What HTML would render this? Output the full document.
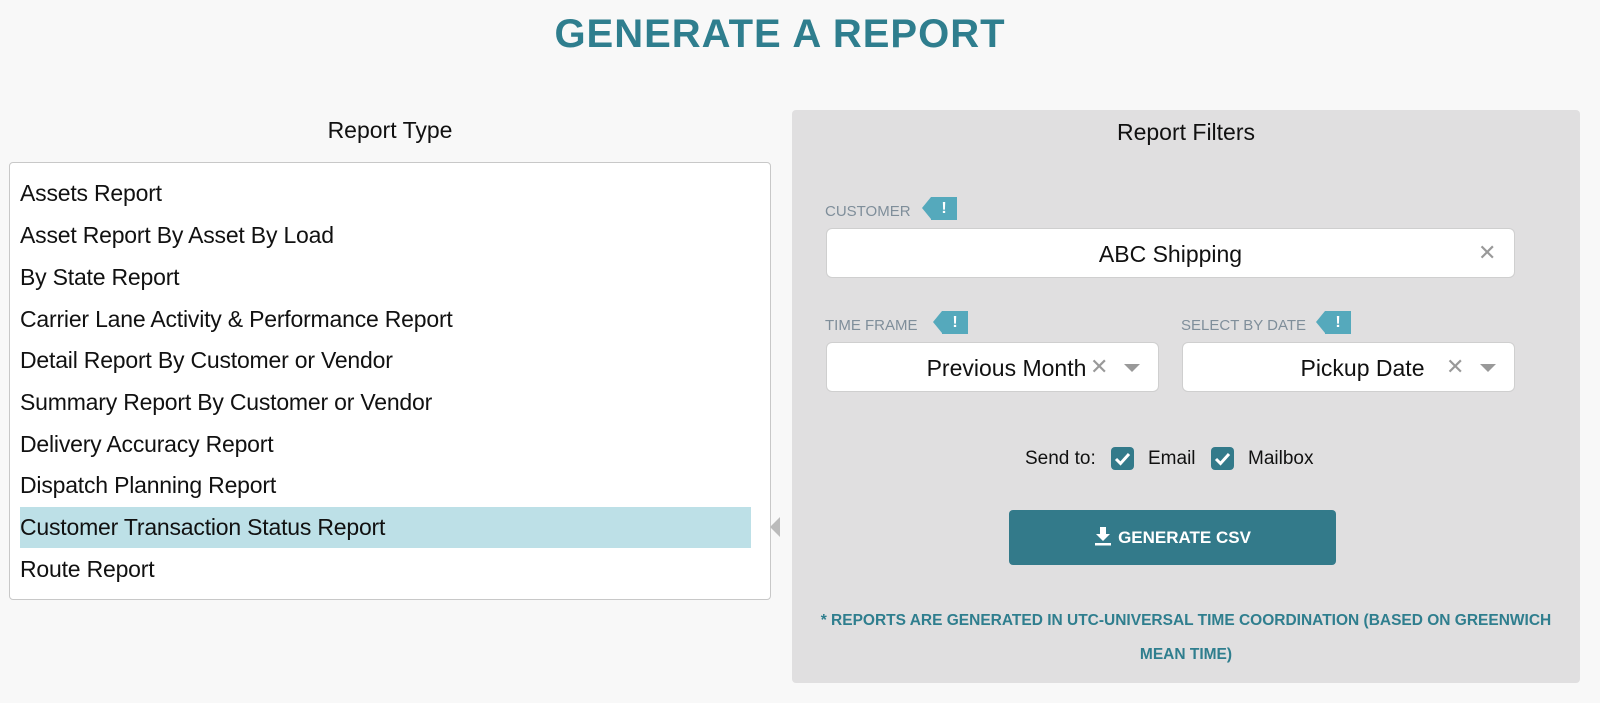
<!DOCTYPE html>
<html><head><style>
body{margin:0;width:1600px;height:703px;background:#f8f8f8;font-family:"Liberation Sans",sans-serif;position:relative;overflow:hidden;color:#111}
.a{position:absolute}
h1{position:absolute;left:0;width:1560px;top:12px;margin:0;text-align:center;font-size:40px;color:#2f7e8e;letter-spacing:1px;font-weight:bold}
.list{left:9px;top:162px;width:760px;height:436px;border:1px solid #c8c8c8;border-radius:4px;background:#fff}
.it{position:absolute;left:10px;width:731px;height:41px;line-height:41px;font-size:23px;letter-spacing:-0.2px}
.sel{background:#bde0e7}
.panel{left:792px;top:110px;width:788px;height:573px;background:#e0dfe0;border-radius:4px}
.lbl{font-size:15px;color:#7f8e9a;}
.badge{width:26px;height:23px;background:#55a9bc;color:#fff;font-weight:bold;font-size:16px;text-align:center;line-height:23px}
.badge:before{content:"";position:absolute;left:-9px;top:0;border-right:9px solid #55a9bc;border-top:11.5px solid transparent;border-bottom:11.5px solid transparent}
.inp{background:#fff;border:1px solid #cfcfcf;border-radius:6px;font-size:23px;text-align:center;box-sizing:border-box}
.x{color:#999;font-size:22px}
.caret{width:0;height:0;border-left:8px solid transparent;border-right:8px solid transparent;border-top:8px solid #999}
.cb{width:23px;height:23px;background:#337a8a;border-radius:4px}
</style></head><body>
<h1>GENERATE A REPORT</h1>
<div class="a" style="left:10px;width:760px;top:117px;text-align:center;font-size:23px">Report Type</div>
<div class="a list">
<div class="it" style="top:10px">Assets Report</div>
<div class="it" style="top:52px">Asset Report By Asset By Load</div>
<div class="it" style="top:94px">By State Report</div>
<div class="it" style="top:136px">Carrier Lane Activity &amp; Performance Report</div>
<div class="it" style="top:177px">Detail Report By Customer or Vendor</div>
<div class="it" style="top:219px">Summary Report By Customer or Vendor</div>
<div class="it" style="top:261px">Delivery Accuracy Report</div>
<div class="it" style="top:302px">Dispatch Planning Report</div>
<div class="it sel" style="top:344px">Customer Transaction Status Report</div>
<div class="it" style="top:386px">Route Report</div>
</div>
<div class="a" style="left:770px;top:517px;border-right:10px solid #bbb;border-top:10px solid transparent;border-bottom:10px solid transparent"></div>
<div class="a panel"></div>
<div class="a" style="left:792px;width:788px;top:119px;text-align:center;font-size:23px">Report Filters</div>
<div class="a lbl" style="left:825px;top:203px">CUSTOMER</div>
<div class="a badge" style="left:931px;top:197px">!</div>
<div class="a inp" style="left:826px;top:228px;width:689px;height:50px;line-height:50px">ABC Shipping</div>
<div class="a x" style="left:1478px;top:240px">✕</div>
<div class="a lbl" style="left:825px;top:317px">TIME FRAME</div>
<div class="a badge" style="left:942px;top:311px">!</div>
<div class="a lbl" style="left:1181px;top:317px">SELECT BY DATE</div>
<div class="a badge" style="left:1325px;top:311px">!</div>
<div class="a inp" style="left:826px;top:342px;width:333px;height:50px;line-height:50px;padding-left:28px">Previous Month</div>
<div class="a x" style="left:1090px;top:354px">✕</div>
<div class="a caret" style="left:1124px;top:364px"></div>
<div class="a inp" style="left:1182px;top:342px;width:333px;height:50px;line-height:50px;padding-left:28px">Pickup Date</div>
<div class="a x" style="left:1446px;top:354px">✕</div>
<div class="a caret" style="left:1480px;top:364px"></div>
<div class="a" style="left:1025px;top:448px;font-size:19px">Send to:</div>
<div class="a cb" style="left:1111px;top:447px"><svg width="23" height="23"><path d="M5 12l4.5 4.5L18 7" stroke="#fff" stroke-width="3" fill="none"/></svg></div>
<div class="a" style="left:1148px;top:448px;font-size:19px">Email</div>
<div class="a cb" style="left:1211px;top:447px"><svg width="23" height="23"><path d="M5 12l4.5 4.5L18 7" stroke="#fff" stroke-width="3" fill="none"/></svg></div>
<div class="a" style="left:1248px;top:448px;font-size:19px">Mailbox</div>
<div class="a" style="left:1009px;top:510px;width:327px;height:55px;background:#337a8a;border-radius:4px;color:#fff;font-weight:bold;font-size:17px;line-height:55px;text-align:center"><svg width="18" height="20" style="vertical-align:-3px;margin-right:6px"><path d="M6 1h6v7h4l-7 7-7-7h4z" fill="#fff"/><rect x="1" y="17" width="16" height="2.5" fill="#fff"/></svg>GENERATE CSV</div>
<div class="a" style="left:792px;width:788px;top:604px;text-align:center;font-size:15.5px;font-weight:bold;color:#2f7e8e;line-height:34px">* REPORTS ARE GENERATED IN UTC-UNIVERSAL TIME COORDINATION (BASED ON GREENWICH<br>MEAN TIME)</div>
</body></html>
